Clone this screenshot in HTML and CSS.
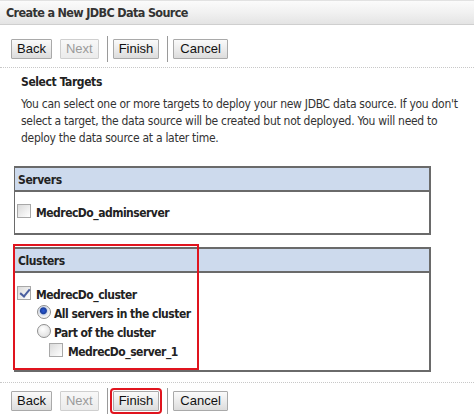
FILE: index.html
```html
<!DOCTYPE html>
<html>
<head>
<meta charset="utf-8">
<link rel="stylesheet" href="styles.css">
</head>
<body>
<div class="title">Create a New JDBC Data Source</div>
<div class="toolbar top">
  <span class="btn">Back</span>
  <span class="btn disabled">Next</span>
  <span class="sep"></span>
  <span class="btn">Finish</span>
  <span class="sep"></span>
  <span class="btn wide">Cancel</span>
</div>
<div class="content">
  <h2 class="heading">Select Targets</h2>
  <p class="desc">You can select one or more targets to deploy your new JDBC data source. If you don't select a target, the data source will be created but not deployed. You will need to deploy the data source at a later time.</p>
  <div class="table servers">
    <div class="thead">Servers</div>
    <div class="tbody">
      <div class="row"><span class="cb"></span><span class="lbl">MedrecDo_adminserver</span></div>
    </div>
  </div>
  <div class="table clusters">
    <div class="thead">Clusters</div>
    <div class="tbody">
      <div class="row"><span class="cb checked"></span><span class="lbl">MedrecDo_cluster</span></div>
      <div class="row l1"><span class="rb on"></span><span class="lbl">All servers in the cluster</span></div>
      <div class="row l1"><span class="rb"></span><span class="lbl">Part of the cluster</span></div>
      <div class="row l2"><span class="cb"></span><span class="lbl">MedrecDo_server_1</span></div>
    </div>
    <div class="highlight"></div>
  </div>
</div>
<div class="toolbar bottom">
  <span class="btn">Back</span>
  <span class="btn disabled">Next</span>
  <span class="sep"></span>
  <span class="btn marked">Finish</span>
  <span class="sep"></span>
  <span class="btn wide">Cancel</span>
</div>
</body>
</html>
```
FILE: styles.css
```css
html, body {
  margin: 0;
  padding: 0;
  background: #fff;
  width: 474px;
  height: 417px;
  overflow: hidden;
  font-family: "DejaVu Sans Condensed", "DejaVu Sans", sans-serif;
  color: #222;
}
.title {
  box-sizing: border-box;
  height: 25px;
  border-top: 1px solid #e2e2e2;
  border-bottom: 1px solid #cfcfcf;
  background: linear-gradient(#fbfbfb, #f1f1f1 50%, #e4e4e4);
  font-weight: bold;
  font-size: 12.5px;
  letter-spacing: -0.65px;
  line-height: 23px;
  padding-left: 6px;
  color: #333;
}
.toolbar {
  display: flex;
  align-items: center;
  padding-left: 11px;
  height: 30px;
}
.toolbar.top {
  margin-top: 9px;
  border-bottom: 1px dotted #c8c8c8;
  padding-bottom: 3px;
}
.toolbar.bottom {
  margin-top: 10px;
  border-top: 1px dotted #c8c8c8;
  padding-top: 3px;
}
.btn {
  box-sizing: border-box;
  height: 20px;
  padding: 0 5px;
  border: 1px solid #a9a9a9;
  border-radius: 1px;
  background: linear-gradient(#fafafa, #ececec 50%, #dcdcdc);
  font-family: "Liberation Sans", Arial, sans-serif;
  font-size: 13px;
  line-height: 18px;
  color: #111;
  margin-right: 8px;
}
.btn.disabled {
  color: #9a9a9a;
  border-color: #cfcfcf;
  background: linear-gradient(#f8f8f8, #ebebeb);
}
.btn.wide {
  padding: 0 6px;
}
.btn.marked {
  outline: 2px solid #e0141e;
  outline-offset: 1px;
}
.sep {
  width: 1px;
  height: 26px;
  background: #9a9a9a;
  margin: 0 5px 0 0;
}
.content {
  padding-left: 14px;
}
.heading {
  margin: 0;
  padding: 6px 0 0 7px;
  font-size: 12px;
  font-weight: bold;
  letter-spacing: -0.4px;
  line-height: 16px;
  color: #222;
}
.desc {
  margin: 0;
  padding: 6px 10px 0 7px;
  font-size: 12px;
  letter-spacing: -0.28px;
  line-height: 17px;
  color: #333;
}
.table {
  position: relative;
  width: 417px;
  box-sizing: border-box;
  border: 2px solid #6a6a6a;
  border-width: 2px 2px 2px 1px;
}
.servers {
  margin-top: 19px;
}
.clusters {
  margin-top: 12px;
}
.thead {
  box-sizing: border-box;
  height: 24px;
  background: #cddaed;
  border-bottom: 2px solid #6a6a6a;
  font-weight: bold;
  font-size: 12px;
  letter-spacing: -0.4px;
  line-height: 24px;
  padding-left: 3px;
  color: #222;
}
.servers .tbody {
  height: 41px;
  display: flex;
  flex-direction: column;
  justify-content: center;
}
.clusters .tbody {
  height: 97px;
  padding-top: 12px;
  box-sizing: border-box;
}
.row {
  display: flex;
  align-items: center;
  height: 19px;
  padding-left: 2px;
}
.row.l1 { padding-left: 22px; }
.row.l2 { padding-left: 34px; }
.lbl {
  font-weight: bold;
  font-size: 12px;
  letter-spacing: -0.5px;
  color: #222;
}
.cb {
  box-sizing: border-box;
  width: 14px;
  height: 14px;
  border: 1px solid #a8a8a8;
  background: linear-gradient(135deg, #dadada, #f4f4f4 70%, #fff);
  margin-right: 5px;
  position: relative;
  top: -2px;
}
.cb.checked::after {
  content: "";
  position: absolute;
  left: 4px;
  top: 0px;
  width: 4px;
  height: 8px;
  border: solid #4a5fa0;
  border-width: 0 2px 2px 0;
  transform: rotate(40deg);
}
.rb {
  box-sizing: border-box;
  width: 14px;
  height: 14px;
  border-radius: 50%;
  border: 1px solid #8f8f8f;
  background: radial-gradient(circle at 40% 35%, #fff, #d8d8d8);
  margin-right: 3px;
  position: relative;
  top: -2px;
}
.rb.on {
  background: radial-gradient(circle at 45% 40%, #2a5bd8 0, #1b3f9e 3px, #cfd8e8 4px, #f4f4f4 6px);
}
.highlight {
  position: absolute;
  left: -2px;
  top: -5px;
  width: 186px;
  height: 126px;
  border: 2px solid #e0141e;
  box-sizing: border-box;
  pointer-events: none;
}
```
